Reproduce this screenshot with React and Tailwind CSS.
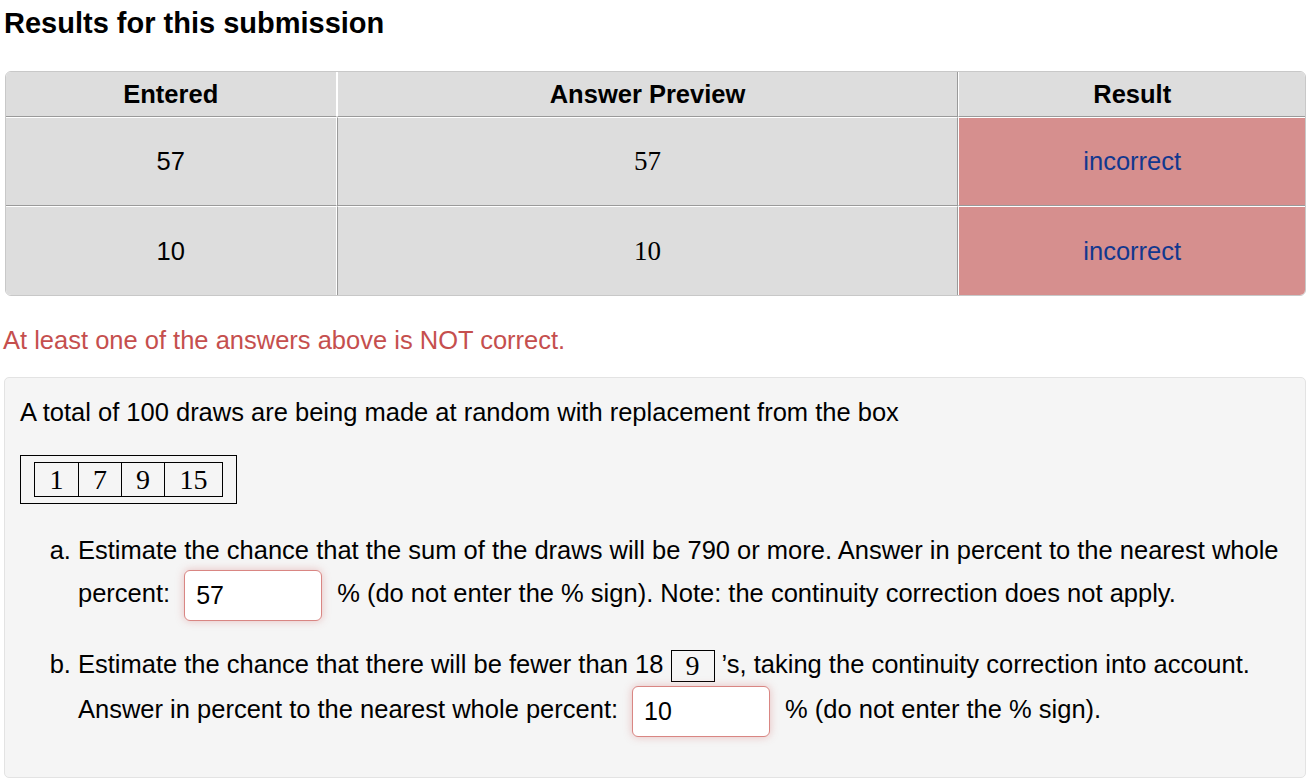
import React from 'react';

const rows = [
    { entered: '57', preview: '57' },
    { entered: '10', preview: '10' },
];

const AnswerInput = ({ value }) => (
    <input
        readOnly
        value={value}
        className="ml-[14px] mr-[15px] h-[51px] w-[138px] rounded-[6px] border border-[#d98683] bg-white px-[11px] align-middle text-[25px] text-black shadow-[0_0_8px_rgba(205,90,90,0.35)] outline-none"
    />
);

const App = () => {
    return (
        <div className="min-h-screen bg-white pl-[4px] pr-[4px] font-['Liberation_Sans',Arial,sans-serif] text-black">
            <h1 className="pt-[6px] text-[29px] font-bold leading-[34px]">Results for this submission</h1>

            <table className="mt-[31px] ml-[1px] w-[1301px] border-separate border-spacing-0 overflow-hidden rounded-[6px] border border-[#c8c8c8] text-[25.5px]">
                <colgroup>
                    <col className="w-[331px]" />
                    <col className="w-[623px]" />
                    <col className="w-[347px]" />
                </colgroup>
                <thead>
                    <tr className="h-[45px] bg-[#dddddd]">
                        <th className="border-r border-b border-r-white border-b-[#9a9a9a] font-bold">Entered</th>
                        <th className="border-r border-b border-r-[#9a9a9a] border-b-[#9a9a9a] border-l border-l-white font-bold">Answer Preview</th>
                        <th className="border-b border-b-[#9a9a9a] border-l border-l-white font-bold">Result</th>
                    </tr>
                </thead>
                <tbody>
                    {rows.map((row, i) => (
                        <tr key={i} className="h-[89px]">
                            <td className={`bg-[#dddddd] text-center border-t border-t-white border-r border-r-white ${i === 0 ? 'border-b border-b-[#9a9a9a]' : ''}`}>
                                {row.entered}
                            </td>
                            <td className={`bg-[#dddddd] text-center font-['Liberation_Serif','DejaVu_Serif',serif] text-[27px] border-t border-t-white border-l border-l-[#9a9a9a] border-r border-r-[#9a9a9a] ${i === 0 ? 'border-b border-b-[#9a9a9a]' : ''}`}>
                                {row.preview}
                            </td>
                            <td className={`bg-[#d68f8e] text-center text-[#12388e] border-t border-t-white border-l border-l-white ${i === 0 ? 'border-b border-b-[#9a9a9a]' : ''}`}>
                                incorrect
                            </td>
                        </tr>
                    ))}
                </tbody>
            </table>

            <p className="mt-[29px] -ml-[1px] text-[25.5px] leading-[30px] text-[#c54f4e]">At least one of the answers above is NOT correct.</p>

            <div className="mt-[22px] mb-[6px] rounded-[5px] border border-[#e3e3e3] bg-[#f5f5f5] px-[15px] pt-[19px] pb-[40px] text-[25.5px]">
                <p className="leading-[30px]">A total of 100 draws are being made at random with replacement from the box</p>

                <div className="mt-[28px] inline-block border border-black px-[13px] py-[6px]">
                    <div className="flex border border-black font-['Liberation_Serif','DejaVu_Serif',serif] text-[28px] leading-[33px]">
                        <span className="w-[43px] text-center">1</span>
                        <span className="w-[43px] border-l border-black text-center">7</span>
                        <span className="w-[43px] border-l border-black text-center">9</span>
                        <span className="w-[58px] border-l border-black text-center">15</span>
                    </div>
                </div>

                <ol className="mt-[26px] list-[lower-alpha] pl-[58px] marker:text-black">
                    <li className="leading-[40px]">
                        Estimate the chance that the sum of the draws will be 790 or more. Answer in percent to the nearest whole percent:
                        <AnswerInput value="57" />
                        % (do not enter the % sign). Note: the continuity correction does not apply.
                    </li>
                    <li className="mt-[22px] leading-[43px]">
                        Estimate the chance that there will be fewer than 18{' '}
                        <span className="inline-block h-[32px] w-[44px] border border-black bg-transparent text-center align-middle font-['Liberation_Serif','DejaVu_Serif',serif] text-[28px] leading-[30px]">9</span>
                        {' '}’s, taking the continuity correction into account. Answer in percent to the nearest whole percent:
                        <AnswerInput value="10" />
                        % (do not enter the % sign).
                    </li>
                </ol>
            </div>
        </div>
    );
};

export default App;
